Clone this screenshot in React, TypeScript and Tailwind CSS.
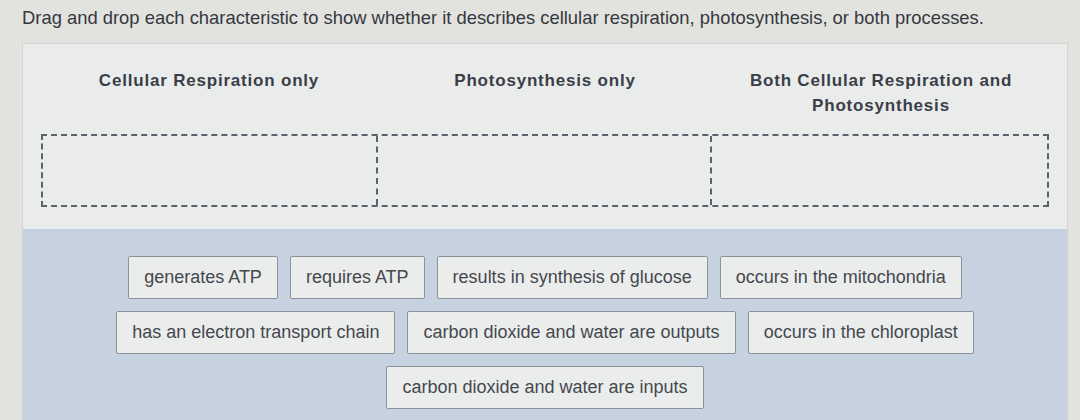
const columns = [
  "Cellular Respiration only",
  "Photosynthesis only",
  "Both Cellular Respiration and Photosynthesis",
];

const rows = [
  [
    "generates ATP",
    "requires ATP",
    "results in synthesis of glucose",
    "occurs in the mitochondria",
  ],
  [
    "has an electron transport chain",
    "carbon dioxide and water are outputs",
    "occurs in the chloroplast",
  ],
  ["carbon dioxide and water are inputs"],
];

const Chip = ({ label }: { label: string }) => (
  <div className="h-[43px] px-[15px] flex items-center border border-[#8d9199] rounded-[2px] bg-[#ebedec] text-[18px] text-[#45484e] whitespace-nowrap">
    {label}
  </div>
);

const App = () => {
  return (
    <div className="w-[1080px] h-[420px] overflow-hidden bg-[#e2e3df] font-['Liberation_Sans',Arial,sans-serif]">
      <p className="pl-[22px] pt-[8px] leading-[20px] text-[18.4px] text-[#35383e]">
        Drag and drop each characteristic to show whether it describes cellular
        respiration, photosynthesis, or both processes.
      </p>

      <div className="ml-[22px] mt-[15px] w-[1046px] h-[400px] border border-[#d2d4d3] bg-[#eaeceb]">
        {/* column headings */}
        <div className="mx-[18px] pt-[24px] grid grid-cols-3 text-center font-bold text-[17px] leading-[25px] tracking-[0.8px] text-[#3b3e48]">
          {columns.map((col) => (
            <p key={col} className="px-[30px]">
              {col}
            </p>
          ))}
        </div>

        {/* drop zones */}
        <div className="mx-[18px] mt-[16px] h-[73px] grid grid-cols-3 border-2 border-dashed border-[#5c616c] divide-x-2 divide-dashed divide-[#5c616c]">
          <div />
          <div />
          <div />
        </div>

        {/* answer bank */}
        <div className="mt-[22px] h-full bg-[#c7d2e0] pt-[27px] flex flex-col items-center gap-[12px]">
          {rows.map((row, i) => (
            <div key={i} className="flex gap-[12px]">
              {row.map((label) => (
                <Chip key={label} label={label} />
              ))}
            </div>
          ))}
        </div>
      </div>
    </div>
  );
};

export default App;
